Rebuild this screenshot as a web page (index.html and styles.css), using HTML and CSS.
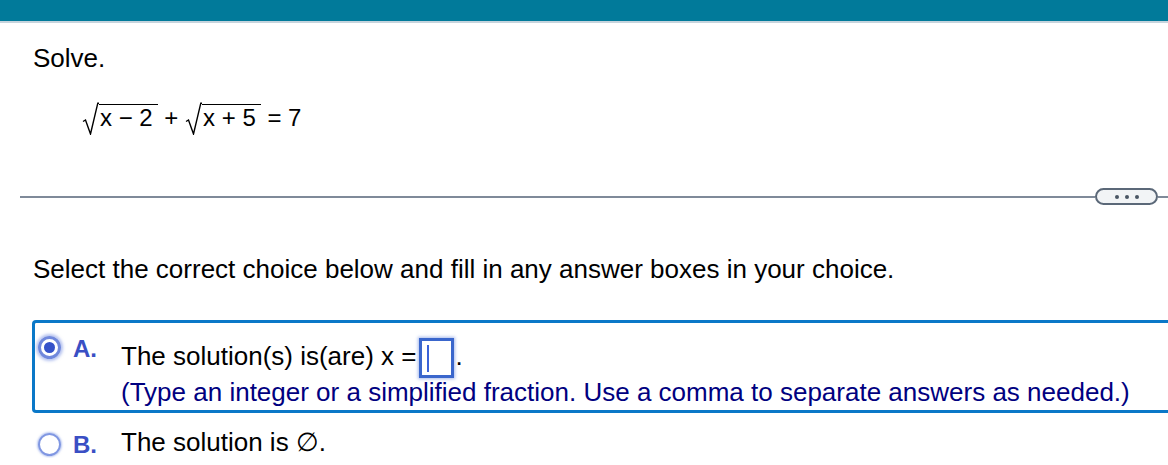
FILE: index.html
```html
<!DOCTYPE html>
<html>
<head>
<meta charset="utf-8">
<link rel="stylesheet" href="styles.css">
</head>
<body>
<div class="topbar"></div>
<div class="content">
  <div class="solve">Solve.</div>
  <div class="equation"><span class="root"><svg class="radical" width="17" height="33" viewBox="0 0 17 33"><path d="M1 19.5 L3.5 18 L8.5 32 L15.8 1.2 H17" fill="none" stroke="#000" stroke-width="1.4" stroke-linejoin="miter"/></svg><span class="radicand">x − 2</span></span> + <span class="root"><svg class="radical" width="17" height="33" viewBox="0 0 17 33"><path d="M1 19.5 L3.5 18 L8.5 32 L15.8 1.2 H17" fill="none" stroke="#000" stroke-width="1.4" stroke-linejoin="miter"/></svg><span class="radicand">x + 5</span></span> = 7</div>
</div>
<div class="divider">
  <div class="line"></div>
  <div class="pill"><span></span><span></span><span></span></div>
  <div class="line tail"></div>
</div>
<div class="content">
  <div class="instruction">Select the correct choice below and fill in any answer boxes in your choice.</div>
</div>
<div class="choices">
  <div class="choice selected">
    <div class="radio on"><div class="dot"></div></div>
    <div class="label">A.</div>
    <div class="body">
      <div class="line1">The solution(s) is(are) x =<span class="answer"><span class="caret"></span></span>.</div>
      <div class="hint">(Type an integer or a simplified fraction. Use a comma to separate answers as needed.)</div>
    </div>
  </div>
  <div class="choice plain">
    <div class="radio"></div>
    <div class="label">B.</div>
    <div class="body">
      <div class="line1">The solution is ∅.</div>
    </div>
  </div>
</div>
</body>
</html>
```
FILE: styles.css
```css
html, body {
  margin: 0;
  padding: 0;
  background: #ffffff;
}
body {
  font-family: "Liberation Sans", Arial, Helvetica, sans-serif;
  color: #000;
  overflow: hidden;
}
.topbar {
  height: 21px;
  background: #017a9a;
  border-bottom: 2px solid #c6d4dd;
}
.content {
  padding-left: 33px;
}
.solve {
  font-size: 26px;
  line-height: 30px;
  margin-top: 20px;
}
.equation {
  margin-top: 28px;
  margin-left: 49px;
  font-size: 24px;
  line-height: 34px;
  height: 34px;
  white-space: nowrap;
}
.root {
  display: inline-block;
}
.radical {
  display: inline-block;
  vertical-align: -9px;
}
.radicand {
  display: inline-block;
  line-height: 24px;
  border-top: 1.5px solid #000;
  padding: 1px 5px 0 1px;
}
.divider {
  display: flex;
  align-items: center;
  height: 17px;
  margin-top: 53px;
  padding-left: 20px;
}
.divider .line {
  flex: 1;
  height: 2px;
  background: #7f8a99;
}
.divider .line.tail {
  flex: 0 0 10px;
}
.pill {
  width: 59px;
  height: 13px;
  border: 2px solid #5b6878;
  border-radius: 9px;
  background: #f2f4f6;
  display: flex;
  align-items: center;
  justify-content: center;
  gap: 6px;
}
.pill span {
  width: 4px;
  height: 4px;
  border-radius: 50%;
  background: #4a5564;
}
.instruction {
  font-size: 26px;
  line-height: 30px;
  margin-top: 49px;
}
.choices {
  margin-top: 36px;
  padding-left: 32px;
}
.choice {
  display: flex;
  align-items: flex-start;
  font-size: 26px;
  border: 3px solid transparent;
  border-right: none;
}
.choice.selected {
  border-color: #0a78c8;
  border-radius: 4px 0 0 4px;
  padding: 13px 0 4px 0;
}
.choice.plain {
  border-bottom: none;
  padding-top: 11px;
}
.radio {
  box-sizing: border-box;
  width: 23px;
  height: 23px;
  border-radius: 50%;
  border: 2px solid #8097e2;
  box-shadow: 0 0 2px 1px rgba(130,155,230,0.55);
  display: flex;
  align-items: center;
  justify-content: center;
  margin-left: 3px;
  flex: 0 0 auto;
}
.choice.plain .radio {
  margin-top: 6px;
}
.radio.on {
  border: 3px solid #7088dc;
  box-shadow: 0 0 3px 2px rgba(110,135,225,0.5);
}
.radio .dot {
  width: 11px;
  height: 11px;
  border-radius: 50%;
  background: #3552c9;
}
.label {
  font-weight: bold;
  font-size: 24px;
  line-height: 26px;
  color: #3a4fc4;
  padding-left: 12px;
  width: 60px;
  box-sizing: border-box;
  flex: 0 0 auto;
}
.choice.plain .label {
  margin-top: 5px;
}
.body {
  flex: 1;
  white-space: nowrap;
}
.choice.selected .body {
  margin-top: 2px;
}
.line1 {
  line-height: 30px;
}
.answer {
  display: inline-block;
  vertical-align: middle;
  box-sizing: border-box;
  width: 35px;
  height: 40px;
  border: 3px solid #3a66cc;
  box-shadow: 0 0 3px 1px rgba(60,100,210,0.45);
  position: relative;
  margin-left: 3px;
  margin-right: 1px;
}
.caret {
  position: absolute;
  left: 5px;
  top: 4px;
  width: 2px;
  height: 27px;
  background: #3a62d8;
}
.hint {
  color: #000080;
  line-height: 28px;
}
```
